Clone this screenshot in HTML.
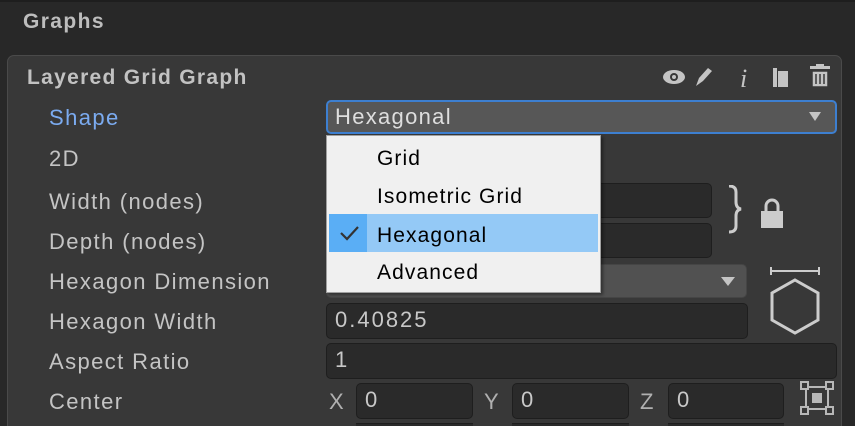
<!DOCTYPE html>
<html><head><style>
html,body{margin:0;width:855px;height:426px;overflow:hidden}
body{background:#282828;font-family:"Liberation Sans",sans-serif;position:relative}
.a{position:absolute}
.lab{position:absolute;left:49px;color:#c4c4c4;font-size:22px;line-height:24px;letter-spacing:1.4px}
.in{position:absolute;background:#2a2a2a;border:1px solid #1e1e1e;border-radius:5px;box-sizing:border-box;color:#c8c8c8;font-size:22px;line-height:32px;padding-left:8px;letter-spacing:2px}
.ax{position:absolute;color:#b0b0b0;font-size:22px;line-height:24px}
.mi{position:absolute;left:377px;font-size:21px;color:#000;line-height:24px;letter-spacing:1.1px}
</style></head><body>
<div class="a" style="left:0;top:0;width:855px;height:2px;background:#1e1e1e"></div>
<div class="a" style="left:23px;top:10px;color:#bdbdbd;font-size:21px;font-weight:bold;letter-spacing:1.4px">Graphs</div>
<div class="a" style="left:7px;top:55px;width:835px;height:371px;box-sizing:border-box;background:#383838;border:1px solid #4a4a4a;border-bottom:none;border-radius:7px 7px 0 0"></div>
<div class="a" style="left:27px;top:66px;color:#c2c2c2;font-size:21px;font-weight:bold;letter-spacing:1.3px">Layered Grid Graph</div>
<svg class="a" style="left:660px;top:63px" width="175" height="28" viewBox="0 0 175 28">
<ellipse cx="14" cy="14" rx="11" ry="7" fill="#c4c4c4"/><circle cx="14" cy="14" r="4" fill="#383838"/><circle cx="14" cy="14" r="2" fill="#c4c4c4"/>
<path d="M36 23 l3-8 9-10 4 3-9 10z" fill="#c4c4c4"/>
<text x="80" y="24" font-family="Liberation Serif" font-style="italic" font-size="26" fill="#c4c4c4">i</text>
<rect x="113" y="5" width="4" height="19" fill="#c4c4c4"/><rect x="118" y="8" width="10" height="16" fill="#c4c4c4"/>
<rect x="150" y="3" width="20" height="3" fill="#c4c4c4"/><rect x="156" y="1" width="8" height="3" fill="#c4c4c4"/><path d="M152 8h16v16h-16z M156 11v10 M160 11v10 M164 11v10" fill="#c4c4c4" stroke="#383838" stroke-width="1.5"/>
</svg>
<div class="lab" style="top:106px;color:#7babf0">Shape</div>
<div class="lab" style="top:147px">2D</div>
<div class="lab" style="top:190px">Width (nodes)</div>
<div class="lab" style="top:230px">Depth (nodes)</div>
<div class="lab" style="top:270px">Hexagon Dimension</div>
<div class="lab" style="top:310px">Hexagon Width</div>
<div class="lab" style="top:350px">Aspect Ratio</div>
<div class="lab" style="top:390px">Center</div>
<div class="in" style="left:326px;top:100px;width:511px;height:34px;background:#575757;border:2px solid #3d7fd0;color:#dedede;line-height:30px;padding-left:7px;letter-spacing:1.3px">Hexagonal</div>
<div class="a" style="left:809px;top:112px;border-left:6px solid transparent;border-right:6px solid transparent;border-top:9px solid #c4c4c4"></div>
<div class="in" style="left:590px;top:183px;width:122px;height:35px"></div>
<div class="in" style="left:590px;top:223px;width:122px;height:35px"></div>
<div class="in" style="left:326px;top:264px;width:421px;height:34px;background:#515151;border-color:#454545"></div>
<div class="a" style="left:721px;top:277px;border-left:7px solid transparent;border-right:7px solid transparent;border-top:9px solid #c4c4c4"></div>
<div class="in" style="left:326px;top:303px;width:422px;height:36px">0.40825</div>
<div class="in" style="left:326px;top:343px;width:511px;height:36px">1</div>
<div class="ax" style="left:329px;top:390px">X</div>
<div class="in" style="left:356px;top:383px;width:117px;height:36px">0</div>
<div class="ax" style="left:484px;top:390px">Y</div>
<div class="in" style="left:512px;top:383px;width:117px;height:36px">0</div>
<div class="ax" style="left:640px;top:390px">Z</div>
<div class="in" style="left:668px;top:383px;width:116px;height:36px">0</div>
<div class="a" style="left:356px;top:423px;width:117px;height:3px;background:#2a2a2a;border-top:1px solid #1e1e1e;box-sizing:border-box"></div>
<div class="a" style="left:512px;top:423px;width:117px;height:3px;background:#2a2a2a;border-top:1px solid #1e1e1e;box-sizing:border-box"></div>
<div class="a" style="left:668px;top:423px;width:116px;height:3px;background:#2a2a2a;border-top:1px solid #1e1e1e;box-sizing:border-box"></div>
<svg class="a" style="left:726px;top:185px" width="60" height="60"><path d="M3 1q7 0 7 6v10q0 6 5 7q-5 1-5 7v10q0 6-7 6" fill="none" stroke="#cccccc" stroke-width="3"/><path d="M40 26v-5a6 6 0 0 1 12 0v5" fill="none" stroke="#cccccc" stroke-width="3"/><rect x="35" y="26" width="22" height="17" fill="#cccccc"/></svg>
<svg class="a" style="left:768px;top:265px" width="60" height="70"><path d="M3 2v8M3 6h48M51 2v8" stroke="#cccccc" stroke-width="2" fill="none"/><path d="M27 15l23 13v27l-23 13l-23-13v-27z" stroke="#cccccc" stroke-width="3" fill="none"/></svg>
<svg class="a" style="left:799px;top:380px" width="36" height="36"><rect x="7" y="7" width="22" height="22" fill="none" stroke="#b8b8b8" stroke-width="2"/><rect x="13" y="13" width="10" height="10" fill="#b8b8b8"/><g fill="#383838" stroke="#b8b8b8" stroke-width="2"><rect x="2" y="2" width="7" height="7"/><rect x="27" y="2" width="7" height="7"/><rect x="2" y="27" width="7" height="7"/><rect x="27" y="27" width="7" height="7"/></g></svg>
<div class="a" style="left:326px;top:135px;width:275px;height:158px;background:#f0f0f0;border:1px solid #a0a0a0;box-sizing:border-box;box-shadow:2px 2px 3px rgba(0,0,0,.4)"></div>
<div class="a" style="left:329px;top:214px;width:38px;height:38px;background:#5aaef5"></div>
<div class="a" style="left:367px;top:214px;width:231px;height:38px;background:#94c9f6"></div>
<svg class="a" style="left:338px;top:223px" width="22" height="20"><path d="M3 10l6 6 11-12" stroke="#333" stroke-width="2.2" fill="none"/></svg>
<div class="mi" style="top:147px">Grid</div>
<div class="mi" style="top:185px">Isometric Grid</div>
<div class="mi" style="top:224px">Hexagonal</div>
<div class="mi" style="top:261px">Advanced</div>
</body></html>
